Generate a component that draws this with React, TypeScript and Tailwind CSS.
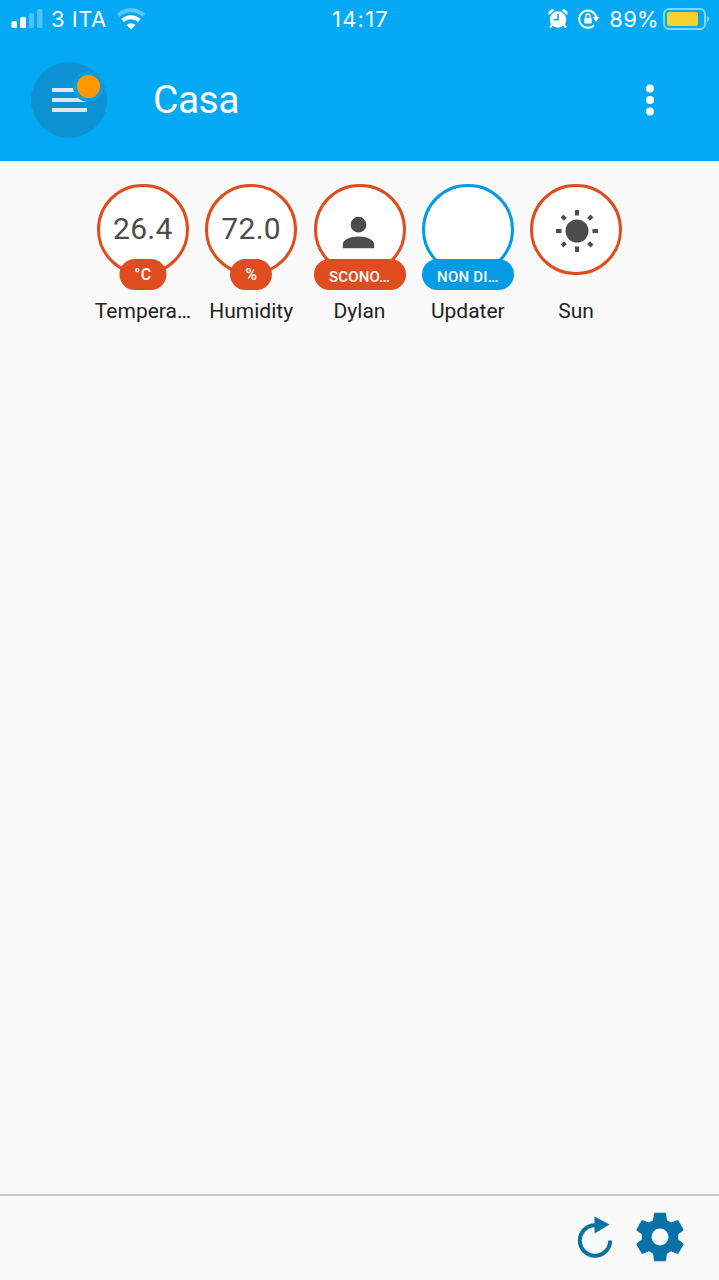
import type { ReactNode } from "react";

type BadgeProps = {
  name: string;
  unit?: string;
  color?: "red" | "blue";
  wide?: boolean;
  children?: ReactNode;
};

function Badge({ name, unit, color = "red", wide, children }: BadgeProps) {
  const border = color === "red" ? "border-[#df4c1e]" : "border-[#039be5]";
  const fill = color === "red" ? "bg-[#df4c1e]" : "bg-[#039be5]";

  return (
    <div className="w-[92px] flex flex-col items-center">
      <div
        className={`relative w-[92px] h-[91px] rounded-full border-[3px] bg-white flex items-center justify-center text-[30px] tracking-[0.3px] text-[#4c4c4c] ${border}`}
      >
        {children}
        {unit && (
          <div
            className={`absolute top-[72px] left-1/2 -translate-x-1/2 h-[31px] rounded-full text-white font-medium whitespace-nowrap text-center ${fill} ${
              wide ? "w-[92px] text-[15px] leading-[36px] tracking-[0.2px]" : "px-[15px] text-[16px] leading-[31px]"
            }`}
          >
            {unit}
          </div>
        )}
      </div>
      <div className="mt-[21px] h-[30px] leading-[30px] text-[21px] text-[#212121] whitespace-nowrap">
        {name}
      </div>
    </div>
  );
}

function StatusBar() {
  return (
    <div className="h-[38px] flex items-center justify-between pl-[11px] pr-[9px] font-['Inter',sans-serif] text-[22px]">
      <div className="w-[280px] flex items-center">
        <svg width="32" height="20" viewBox="0 0 32 20" fill="white">
          <rect x="0.5" y="12" width="5.5" height="7" rx="1.5" />
          <rect x="9" y="8" width="6" height="11" rx="1.5" />
          <rect x="18" y="4" width="5" height="15" rx="1.5" opacity="0.3" />
          <rect x="26" y="0" width="5.5" height="19" rx="1.5" opacity="0.3" />
        </svg>
        <span className="ml-[8px] tracking-[0.5px]">3 ITA</span>
        <svg className="ml-[9px]" width="30" height="22" viewBox="0 0 30 22" fill="none">
          <path d="M2.3 7.5a18 18 0 0 1 25.4 0" stroke="white" strokeOpacity="0.35" strokeWidth="4" />
          <path d="M6.7 12.5a12 12 0 0 1 16.6 0" stroke="white" strokeWidth="4" />
          <path d="M10.5 17a6.5 6.5 0 0 1 9 0L15 21.5z" fill="white" />
        </svg>
      </div>
      <div className="tracking-[1.2px]">14:17</div>
      <div className="w-[280px] flex items-center justify-end">
        <svg width="20" height="20" viewBox="0 0 20 20" fill="white">
          <circle cx="10" cy="10.5" r="8.3" />
          <path d="M1 5.5A3.5 3.5 0 0 1 6 1.3zM19 5.5a3.5 3.5 0 0 0-5-4.2z" stroke="white" />
          <path d="m4.5 15.5-2.5 3M15.5 15.5l2.5 3" stroke="white" strokeWidth="2" />
          <path d="M10 5v5.7H5.5" stroke="#03a9f4" strokeWidth="1.6" fill="none" />
        </svg>
        <svg className="ml-[10px]" width="22" height="20" viewBox="0 0 22 20" fill="none">
          <path d="M18.4 9A8.6 8.6 0 1 0 16 16.2" stroke="white" strokeWidth="2" />
          <path d="M14.7 8h6.8l-3.4 4.8z" fill="white" />
          <rect x="6.3" y="9" width="7.4" height="5.5" rx="0.8" fill="white" />
          <path d="M7.8 9.5V7.2a2.2 2.2 0 0 1 4.4 0v2.3" stroke="white" strokeWidth="1.4" />
        </svg>
        <span className="ml-[9px] tracking-[0.3px]">89%</span>
        <svg className="ml-[4px]" width="47" height="22" viewBox="0 0 47 22">
          <rect x="1" y="1" width="41" height="20" rx="5" fill="none" stroke="white" strokeOpacity="0.5" strokeWidth="2" />
          <rect x="4" y="4" width="31" height="14" rx="2" fill="#f8d12e" />
          <path d="M44 7.5a4 4 0 0 1 0 7z" fill="white" opacity="0.5" />
        </svg>
      </div>
    </div>
  );
}

export default function App() {
  return (
    <div className="h-screen flex flex-col bg-[#fafafa] font-['Roboto',sans-serif]">
      <header className="h-[161px] bg-[#03a9f4] text-white">
        <StatusBar />
        <div className="h-[123px] flex items-center pl-[31px] pr-[64px]">
          <button className="relative size-[76px] rounded-full bg-[#0c92d2] flex items-center justify-center">
            <svg width="35" height="24" viewBox="0 0 35 24" fill="#dfe7ec">
              <path d="M0 0h35v4H0zM0 10h35v4H0zM0 20h35v4H0z" />
            </svg>
            <span className="absolute top-[9px] left-[42px] size-[31px] rounded-full border-4 border-[#109bda] bg-[#ff9800]" />
          </button>
          <h1 className="ml-[46px] pt-0.5 text-[39px] leading-none tracking-[-0.5px]">Casa</h1>
          <svg className="ml-auto" width="10" height="34" viewBox="0 0 10 34" fill="white">
            <circle cx="5" cy="5.5" r="4" />
            <circle cx="5" cy="17" r="4" />
            <circle cx="5" cy="28.5" r="4" />
          </svg>
        </div>
      </header>

      <main className="flex-1 flex items-start justify-center gap-[16.3px] pt-[23px]">
        <Badge name="Tempera…" unit="°C"><span className="pb-[3px]">26.4</span></Badge>
        <Badge name="Humidity" unit="%"><span className="pb-[3px]">72.0</span></Badge>
        <Badge name="Dylan" unit="SCONO…" wide>
          <svg className="mt-[5px] mr-[2px]" width="47" height="47" viewBox="0 0 24 24" fill="currentColor">
            <path d="M12 4a4 4 0 0 1 4 4 4 4 0 0 1-4 4 4 4 0 0 1-4-4 4 4 0 0 1 4-4m0 10c4.42 0 8 1.79 8 4v2H4v-2c0-2.21 3.58-4 8-4Z" />
          </svg>
        </Badge>
        <Badge name="Updater" unit="NON DI…" color="blue" wide />
        <Badge name="Sun">
          <svg className="ml-[2px] mt-[3px]" width="44" height="44" viewBox="-22 -22 44 44" stroke="currentColor" strokeWidth="4">
            <circle r="11.5" fill="currentColor" stroke="none" />
            <path d="M0-21v5.5M0 21v-5.5M-21 0h5.5M21 0h-5.5" />
            <path d="m-15-15 3.4 3.4M15-15l-3.4 3.4M-15 15l3.4-3.4M15 15l-3.4-3.4" />
          </svg>
        </Badge>
      </main>

      <footer className="h-[86px] border-t-2 border-[#c8c8c8] flex items-center justify-end pr-[30px] pb-[2px]">
        <button>
          <svg width="36" height="44" viewBox="0 0 36 44" fill="none">
            <path d="M33.2 25.5A15.2 15.2 0 1 1 18 10.3" stroke="#0672a6" strokeWidth="4" />
            <path d="M17.5 1.5 32.5 9.5 17.5 18.5z" fill="#0672a6" />
          </svg>
        </button>
        <button className="ml-[18.5px]">
          <svg width="58" height="58" viewBox="0 0 24 24" fill="#0672a6">
            <path d="M12 15.5A3.5 3.5 0 0 1 8.5 12 3.5 3.5 0 0 1 12 8.5a3.5 3.5 0 0 1 3.5 3.5 3.5 3.5 0 0 1-3.5 3.5m7.43-2.53c.04-.32.07-.64.07-.97 0-.33-.03-.66-.07-1l2.11-1.63c.19-.15.24-.42.12-.64l-2-3.46c-.12-.22-.39-.31-.61-.22l-2.49 1c-.52-.39-1.06-.73-1.69-.98l-.37-2.65A.506.506 0 0 0 14 2h-4c-.25 0-.46.18-.5.42l-.37 2.65c-.63.25-1.17.59-1.69.98l-2.49-1c-.22-.09-.49 0-.61.22l-2 3.46c-.13.22-.07.49.12.64L4.57 11c-.04.34-.07.67-.07 1 0 .33.03.65.07.97l-2.11 1.66c-.19.15-.25.42-.12.64l2 3.46c.12.22.39.3.61.22l2.49-1.01c.52.4 1.06.74 1.69.99l.37 2.65c.04.24.25.42.5.42h4c.25 0 .46-.18.5-.42l.37-2.65c.63-.26 1.17-.59 1.69-.99l2.49 1.01c.22.08.49 0 .61-.22l2-3.46c.12-.22.07-.49-.12-.64l-2.11-1.66Z" />
          </svg>
        </button>
      </footer>
    </div>
  );
}
